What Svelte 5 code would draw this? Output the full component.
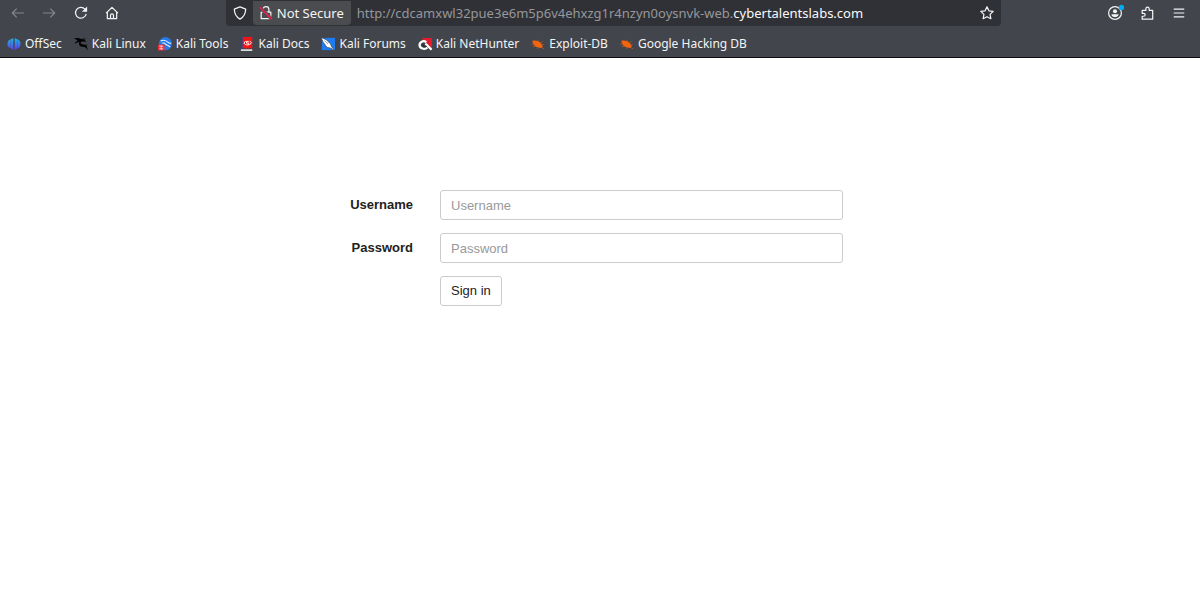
<script>
let username = '';
let password = '';
let address = {
    prefix: 'http://cdcamxwl32pue3e6m5p6v4ehxzg1r4nzyn0oysnvk-web.',
    domain: 'cybertalentslabs.com'
};

const bookmarks = [
    { label: 'OffSec', icon: 'offsec' },
    { label: 'Kali Linux', icon: 'dragon' },
    { label: 'Kali Tools', icon: 'tools' },
    { label: 'Kali Docs', icon: 'docs' },
    { label: 'Kali Forums', icon: 'forums' },
    { label: 'Kali NetHunter', icon: 'nethunter' },
    { label: 'Exploit-DB', icon: 'bug' },
    { label: 'Google Hacking DB', icon: 'bug' }
];
</script>

<header>
    <div class="toolbar">
        <nav class="history" aria-label="Browser">
            <button class="dim" aria-label="Back">
                <svg viewBox="0 0 16 16"><path d="M15 8H1.5M6.5 3l-5 5 5 5" /></svg>
            </button>
            <button class="dim" aria-label="Forward">
                <svg viewBox="0 0 16 16"><path d="M1 8h13.5M9.5 3l5 5-5 5" /></svg>
            </button>
            <button aria-label="Reload">
                <svg viewBox="0 0 16 16"><path d="M14 9A6.2 6.2 0 1 1 12.5 3.5" /><path class="solid" d="M15 .5v6H9z" /></svg>
            </button>
            <button aria-label="Home">
                <svg viewBox="0 0 16 16"><path d="M1.200 8.2 8 1.6l6.8 6.6M2.7 7.2v7.3h10.6V7.2M6.3 14.3v-3.6a1.700 1.700 0 0 1 3.4 0v3.6" /></svg>
            </button>
        </nav>
        <div class="urlbar">
            <button class="shield" aria-label="Tracking protection">
                <svg viewBox="0 0 16 16"><path d="M8 1 14.5 3.5c0 5.500-2 9-6.500 11.500C3.5 12.500 1.500 9 1.500 3.500z" /></svg>
            </button>
            <button class="security">
                <svg viewBox="0 0 16 16"><path d="M4.700 7V4a3.300 3.300 0 0 1 6.600 0V7M2.500 7h11v7.500h-11z" /><path class="cut" d="m1 1.500 13.500 13.500" /><path class="slash" d="m1 1.500 13.500 13.500" /></svg>
                Not Secure
            </button>
            <span class="address">{address.prefix}<b>{address.domain}</b></span>
            <button class="star" aria-label="Bookmark this page">
                <svg viewBox="0 0 16 16"><path d="m8 1 2.2 4.5 4.9.7-3.6 3.4.9 4.9L8 12.2l-4.4 2.3.9-4.9L.9 6.2l4.900-.7z" /></svg>
            </button>
        </div>
        <div class="actions">
            <button aria-label="Account">
                <svg viewBox="0 0 16 16"><circle cx="8" cy="8" r="7.3" /><circle class="solid" cx="8" cy="6" r="2.3" /><path class="solid" d="M3.8 9.300h8.400C11.600 11.800 10 12.700 8 12.700s-3.600-.9-4.200-3.400z" /><circle class="dot" cx="15.4" cy="1.7" r="3" /></svg>
            </button>
            <button aria-label="Extensions">
                <svg viewBox="0 0 16 16"><path d="M2.5 15h12V5H10.5V3.300a1.900 1.900 0 0 0-3.800 0V5H2.500v3.300h1.700a1.700 1.700 0 0 1 0 3.400H2.500z" /></svg>
            </button>
            <button aria-label="Menu">
                <svg viewBox="0 0 16 16"><path d="M2 3.500h12M2 8h12M2 12.500h12" /></svg>
            </button>
        </div>
    </div>

    <nav class="bookmarks" aria-label="Bookmarks">
        {#each bookmarks as bookmark}
            <a href="#{bookmark.icon}">
                <svg viewBox="0 0 16 16" aria-hidden="true">
                    {#if bookmark.icon === 'offsec'}
                        <defs>
                            <linearGradient id="offsec-fill" x2="0" y2="1">
                                <stop stop-color="#19b8e6" />
                                <stop offset="1" stop-color="#6039ec" />
                            </linearGradient>
                        </defs>
                        <path fill="url(#offsec-fill)" d="M7.200 1.500v13.500L4.500 13V2.500zM8.800 1.500v13.500l2.700-2V2.500zM4.200 2.500v10.700C1.500 12 .5 10 .5 7.700S1.500 3.700 4.200 2.500zM11.800 2.500v10.700c2.700-1.200 3.700-3.200 3.700-5.500s-1-4-3.700-5.200z" />
                    {:else if bookmark.icon === 'dragon'}
                        <path d="M0 1.500 5 1l4 1.500 3 .5 2 2.500-3-.5-3 .5c-1 2 0 2.700 3 3.200 3.500.5 4.500 3 4.500 6.800-1.300-3-2.500-4-5-4.300C6.500 11 5 8.500 6 5L1.500 7.500 4 4z" />
                        <path d="m1 7 4-2M8 3l5-1M11 10l4-1" stroke="#000" />
                    {:else if bookmark.icon === 'tools'}
                        <circle cx="8.500" cy="7.500" r="7.500" fill="#2679e8" />
                        <path d="M3 4.500c4-2 7 0 9 2l3 1M5 7c4-1 3 2 6 2.500l3 2" fill="none" stroke="#e5f0ff" stroke-width="1.300" />
                        <rect y="8.500" width="7.500" height="7" rx="1" fill="#e8303c" />
                        <path d="M1.500 10.500H6M1.500 13.500H6M3.700 9.500v5" stroke="#ffd4d4" />
                    {:else if bookmark.icon === 'docs'}
                        <path fill="#174a9d" d="M1 0h3v14H1z" />
                        <path fill="#ef1515" d="M3 0h11v13H3z" />
                        <path fill="#ddd" d="M1 14h13v2H1z" />
                        <path d="M6.500 4.500 4.500 7l2 2M11 4.500l2 2-2 2.500M10 5H7.500v2H10v2H7" fill="none" stroke="#fff" stroke-width="1.100" />
                    {:else if bookmark.icon === 'forums'}
                        <path fill="#1d7cf2" d="M1 1h15v14H1z" />
                        <path fill="#fff" stroke="#39424f" stroke-width=".8" d="M0 .5 6 3l5 5 1 3 4 4.500-5.500-3L7 12 2.500 6z" />
                        <path d="m4 4 4 4" stroke="#65717e" stroke-width=".8" />
                    {:else if bookmark.icon === 'nethunter'}
                        <path fill="#e51a2b" d="M4 1h12v13z" />
                        <path d="m15.500 14.500-7-7" stroke="#fff" stroke-width="2.500" />
                        <path d="M9.500 6C6 3 1.500 6 1.800 9.500s5.500 5.500 9 2.500" fill="none" stroke="#fff" stroke-width="2.600" />
                        <path d="M7 10c0-2-2-2-2-.5s3 2.500 5 1" fill="none" stroke="#20232a" />
                    {:else}
                        <path fill="#f3640f" d="M1.500 4.500C4 3.500 8 4 11 6.500l2.500 4-1.500 2-4-.5C4.500 11.500 2.500 8.500 1.500 4.500z" />
                        <path d="M8 4.500V3M11 6.500 13 5M3 8H0M5 10.500l-3 .5M8 12l-1 1.500M12 8.500h2.500M12 12l3 1.500" stroke="#c95a20" stroke-width=".8" />
                    {/if}
                </svg>
                {bookmark.label}
            </a>
        {/each}
    </nav>
</header>

<main>
    <form on:submit|preventDefault>
        <label for="username">Username</label>
        <input id="username" type="text" placeholder="Username" bind:value={username} />
        <label for="password">Password</label>
        <input id="password" type="password" placeholder="Password" bind:value={password} />
        <button class="submit" type="submit">Sign in</button>
    </form>
</main>

<style>
    :global(body) {
        margin: 0;
        background: #fff;
    }
    header {
        background: #43454c;
        border-bottom: 1px solid #0c0c0d;
        color: #f4f4f5;
        font-family: "Noto Sans", sans-serif;
        font-size: 13px;
        line-height: 16px;
    }
    header button {
        display: flex;
        align-items: center;
        padding: 0;
        border: 0;
        background: none;
        color: inherit;
        font: inherit;
        flex: none;
    }
    header svg {
        width: 14px;
        height: 14px;
        flex: none;
        overflow: visible;
    }
    header button svg {
        fill: none;
        stroke: currentColor;
        stroke-width: 1.4;
        stroke-linejoin: round;
    }
    header .solid {
        fill: currentColor;
        stroke: none;
    }
    header .cut {
        stroke: #4b4c50;
        stroke-width: 4;
    }
    header .slash {
        stroke: #f0204f;
        stroke-width: 1.8;
    }
    header .dot {
        fill: #00adf5;
        stroke: none;
    }
    .toolbar {
        display: flex;
        align-items: center;
        justify-content: space-between;
        height: 26px;
        padding: 0 14px 0 11px;
    }
    .history,
    .actions {
        display: flex;
        justify-content: space-between;
        width: 108px;
    }
    .actions {
        width: 78px;
    }
    header .dim {
        color: #85868c;
    }
    .urlbar {
        display: flex;
        align-items: center;
        width: 66%;
        height: 26px;
        box-sizing: border-box;
        padding-right: 7px;
        border-radius: 0 0 4px 4px;
        background: #303136;
    }
    .urlbar .shield {
        padding: 0 6px 0 7px;
    }
    .urlbar .security {
        gap: 4px;
        height: 24px;
        padding: 0 7px 0 6px;
        border-radius: 0 0 4px 4px;
        background: #4b4c50;
    }
    .address {
        flex: 1;
        min-width: 0;
        margin-left: 6px;
        overflow: hidden;
        white-space: nowrap;
        color: #96979b;
    }
    .address b {
        color: #fafafa;
        font-weight: 400;
    }
    .bookmarks {
        display: flex;
        align-items: center;
        gap: 12px;
        height: 31px;
        padding: 4px 7px 0;
        box-sizing: border-box;
        font-size: 12px;
    }
    .bookmarks a {
        display: flex;
        align-items: center;
        gap: 4px;
        color: inherit;
        text-decoration: none;
        white-space: nowrap;
    }
    main {
        padding: 132px 18px 40px 0;
        font-family: "Liberation Sans", Arial, sans-serif;
        font-size: 13px;
        line-height: 18px;
        color: #222;
    }
    form {
        display: grid;
        grid-template-columns: 74px 1fr;
        gap: 13px 27px;
        align-items: center;
        max-width: 504px;
        margin: 0 auto;
    }
    label {
        font-weight: 700;
        text-align: right;
    }
    input,
    .submit {
        box-sizing: border-box;
        height: 30px;
        padding: 0 10px;
        border: 1px solid #ccc;
        border-radius: 3px;
        background: #fff;
        color: inherit;
        font: inherit;
    }
    input {
        width: 100%;
    }
    input::placeholder {
        color: #999;
    }
    .submit {
        grid-column: 2;
        justify-self: start;
    }
</style>
